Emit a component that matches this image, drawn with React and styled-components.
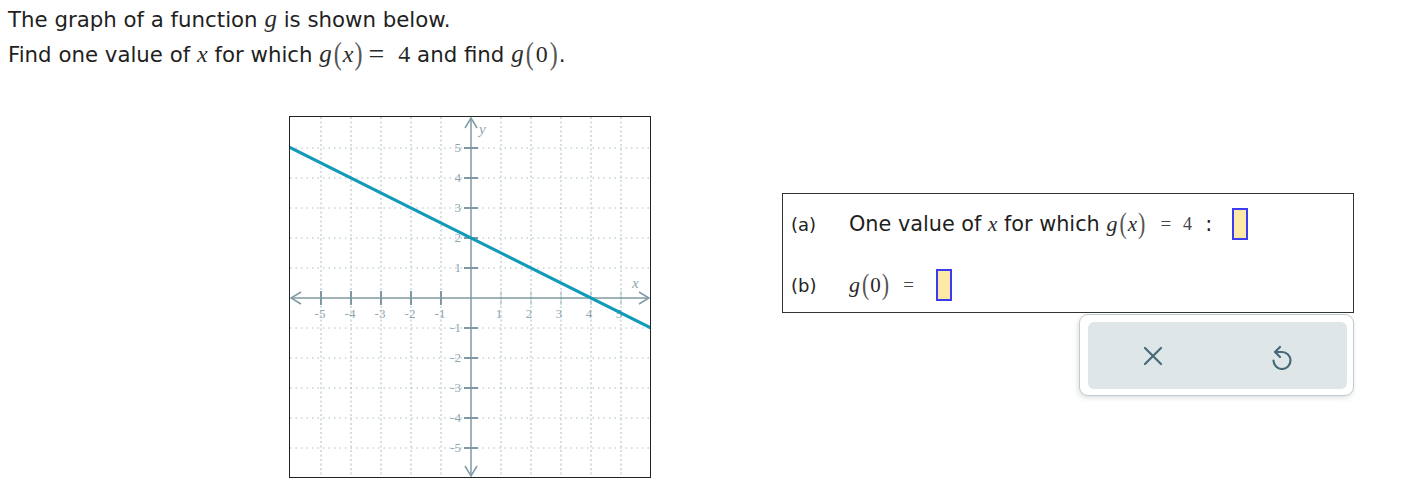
import React from "react";
import styled, { createGlobalStyle } from "styled-components";

const GlobalStyle = createGlobalStyle`
  body {
    margin: 0;
    background: #ffffff;
    font-family: "DejaVu Sans", "Open Sans", sans-serif;
    color: #1f1f1f;
  }
`;

const serif = `"Liberation Serif", "Times New Roman", "DejaVu Serif", serif`;

const Page = styled.div`
  padding: 2px 8px 0 8px;
  width: 1417px;
  box-sizing: border-box;
`;

const Prompt = styled.div`
  font-size: 21.3px;
`;

const PromptLine = styled.div`
  height: ${(props) => props.h}px;
  display: flex;
  align-items: center;
  white-space: pre;
`;

const MathVar = styled.span`
  font-family: ${serif};
  font-style: italic;
  font-size: ${(props) => props.size || 24}px;
  color: #2a2a2a;
  margin: 0 ${(props) => props.right || 0}px 0 ${(props) => props.left || 0}px;
`;

const MathNum = styled.span`
  font-family: ${serif};
  font-size: ${(props) => props.size || 24}px;
  color: ${(props) => props.color || "#2a2a2a"};
  margin: 0 ${(props) => props.right || 0}px 0 ${(props) => props.left || 0}px;
`;

const Paren = styled.span`
  font-family: ${serif};
  font-size: ${(props) => props.size || 24}px;
  color: #555;
  display: inline-block;
  transform: scaleY(1.3);
  margin: 0 ${(props) => props.right || 1}px 0 ${(props) => props.left || 1}px;
`;

const Workspace = styled.div`
  display: flex;
  align-items: flex-start;
  margin-top: 44px;
  padding-left: 281px;
`;

const GraphFrame = styled.div`
  width: 360px;
  height: 360px;
  border: 1px solid #222;
  flex-shrink: 0;
`;

const RightColumn = styled.div`
  margin-left: 131px;
  margin-top: 77px;
  width: 572px;
  display: flex;
  flex-direction: column;
`;

const AnswerBox = styled.div`
  border: 1px solid #333;
  padding: 12px 8px 9px 8px;
  display: flex;
  flex-direction: column;
  gap: 25px;
`;

const AnswerRow = styled.div`
  height: 36px;
  display: flex;
  align-items: center;
  white-space: pre;
`;

const PartLabel = styled.span`
  width: 58px;
  font-size: 18px;
  color: #222;
  flex-shrink: 0;
`;

const AnswerText = styled.span`
  font-size: 20.8px;
  color: #1f1f1f;
`;

const InputSlot = styled.span`
  display: inline-block;
  width: 12px;
  height: 28px;
  border: 2px solid #3b3bf0;
  background: #fde9a6;
  margin-left: ${(props) => props.left || 0}px;
`;

const ButtonPanel = styled.div`
  margin-top: 1px;
  margin-left: auto;
  width: 275px;
  height: 82px;
  box-sizing: border-box;
  border: 1px solid #bfcbd0;
  border-radius: 9px;
  background: #fff;
  box-shadow: -1px 2px 5px rgba(60, 80, 90, 0.18);
  padding: 7px 6px 6px 8px;
`;

const ButtonTray = styled.div`
  height: 100%;
  background: #dfe6e8;
  border-radius: 6px;
  display: flex;
`;

const TrayButton = styled.button`
  flex: 1;
  border: none;
  background: transparent;
  display: flex;
  align-items: center;
  justify-content: center;
  padding: 0;
  cursor: pointer;
`;

const axis = "#7f9aa4";
const grid = "#a9bec5";
const label = "#8ea6af";
const O = 181;
const U = 30;
const px = (x) => O + x * U;
const py = (y) => O - y * U;
const units = [-5, -4, -3, -2, -1, 1, 2, 3, 4, 5];

function Graph() {
  return (
    <GraphFrame>
      <svg width="360" height="360" viewBox="0 0 360 360" fontFamily={serif}>
        {units.map((u) => (
          <line key={"v" + u} x1={px(u)} y1="0" x2={px(u)} y2="360" stroke={grid} strokeWidth="1" strokeDasharray="2 2.5" />
        ))}
        {units.map((u) => (
          <line key={"h" + u} x1="0" y1={py(u)} x2="360" y2={py(u)} stroke={grid} strokeWidth="1" strokeDasharray="1.5 4" />
        ))}
        {/* axes */}
        <line x1="1" y1={O} x2="359" y2={O} stroke={axis} strokeWidth="1.5" />
        <line x1={O} y1="1" x2={O} y2="359" stroke={axis} strokeWidth="1.5" />
        <polyline points={`11,${O - 6} 1,${O} 11,${O + 6}`} fill="none" stroke={axis} strokeWidth="1.5" />
        <polyline points={`349,${O - 6} 359,${O} 349,${O + 6}`} fill="none" stroke={axis} strokeWidth="1.5" />
        <polyline points={`${O - 6},11 ${O},1 ${O + 6},11`} fill="none" stroke={axis} strokeWidth="1.5" />
        <polyline points={`${O - 6},349 ${O},359 ${O + 6},349`} fill="none" stroke={axis} strokeWidth="1.5" />
        {/* ticks */}
        {units.map((u) => (
          <line key={"tx" + u} x1={px(u)} y1={O - 7} x2={px(u)} y2={O + 7} stroke={axis} strokeWidth={u < 0 ? 2 : 1} opacity={u < 0 ? 1 : 0.6} />
        ))}
        {units.map((u) => (
          <line key={"ty" + u} x1={O - 7} y1={py(u)} x2={O + 7} y2={py(u)} stroke={axis} strokeWidth="2" />
        ))}
        {/* labels */}
        {units.map((u) => (
          <text key={"lx" + u} x={px(u) + (u > 0 ? -2 : -1)} y={O + 20} textAnchor="middle" fontSize="13" fill={label}>
            {u}
          </text>
        ))}
        {units.map((u) => (
          <text key={"ly" + u} x={O - 10} y={py(u) + 4} textAnchor="end" fontSize="13" fill={label}>
            {u}
          </text>
        ))}
        <text x={O + 8} y="17" fontStyle="italic" fontSize="15" fill={label}>y</text>
        <text x="342" y={O - 10} fontStyle="italic" fontSize="15" fill={label}>x</text>
        {/* function */}
        <line x1={px(-6.2)} y1={py(5.1)} x2={px(6.2)} y2={py(-1.1)} stroke="#129ab9" strokeWidth="3" />
      </svg>
    </GraphFrame>
  );
}

function CloseIcon() {
  return (
    <svg width="20" height="20" viewBox="0 0 20 20">
      <path d="M2 2 L18 18 M18 2 L2 18" stroke="#456b78" strokeWidth="2.2" strokeLinecap="round" fill="none" />
    </svg>
  );
}

function UndoIcon() {
  return (
    <svg width="22" height="26" viewBox="0 0 22 26" style={{ marginTop: 2 }}>
      <path
        d="M4 8 L9 3 M4 8 L9 13 M4 8 H11 A8.5 8.5 0 1 1 2.5 16.5"
        stroke="#456b78"
        strokeWidth="2.2"
        strokeLinecap="round"
        strokeLinejoin="round"
        fill="none"
      />
    </svg>
  );
}

export default function App() {
  return (
    <Page>
      <GlobalStyle />
      <Prompt>
        <PromptLine h={34}>
          The graph of a function <MathVar size={25}>g</MathVar> is shown below.
        </PromptLine>
        <PromptLine h={36}>
          Find one value of <MathVar size={24}>x</MathVar> for which{" "}
          <MathVar size={25}>g</MathVar>
          <Paren left={2}>(</Paren>
          <MathVar size={24}>x</MathVar>
          <Paren>)</Paren>
          <MathNum size={28} left={5} right={14}>=</MathNum>
          <MathNum>4</MathNum> and find <MathVar size={25}>g</MathVar>
          <Paren left={2} right={2}>(</Paren>
          <MathNum>0</MathNum>
          <Paren left={2}>)</Paren>.
        </PromptLine>
      </Prompt>
      <Workspace>
        <Graph />
        <RightColumn>
          <AnswerBox>
            <AnswerRow>
              <PartLabel>(a)</PartLabel>
              <AnswerText>
                One value of <MathVar size={21}>x</MathVar> for which{" "}
              </AnswerText>
              <MathVar size={22}>g</MathVar>
              <Paren size={22} left={2}>(</Paren>
              <MathVar size={21}>x</MathVar>
              <Paren size={22}>)</Paren>
              <MathNum size={19} color="#444" left={14} right={12}>=</MathNum>
              <MathNum size={18} color="#444">4</MathNum>
              <AnswerText>  :</AnswerText>
              <InputSlot left={20} />
            </AnswerRow>
            <AnswerRow>
              <PartLabel>(b)</PartLabel>
              <MathVar size={22}>g</MathVar>
              <Paren size={22} left={2}>(</Paren>
              <MathNum size={21}>0</MathNum>
              <Paren size={22}>)</Paren>
              <MathNum size={19} color="#444" left={13}>=</MathNum>
              <InputSlot left={22} />
            </AnswerRow>
          </AnswerBox>
          <ButtonPanel>
            <ButtonTray>
              <TrayButton aria-label="clear">
                <CloseIcon />
              </TrayButton>
              <TrayButton aria-label="undo">
                <UndoIcon />
              </TrayButton>
            </ButtonTray>
          </ButtonPanel>
        </RightColumn>
      </Workspace>
    </Page>
  );
}
